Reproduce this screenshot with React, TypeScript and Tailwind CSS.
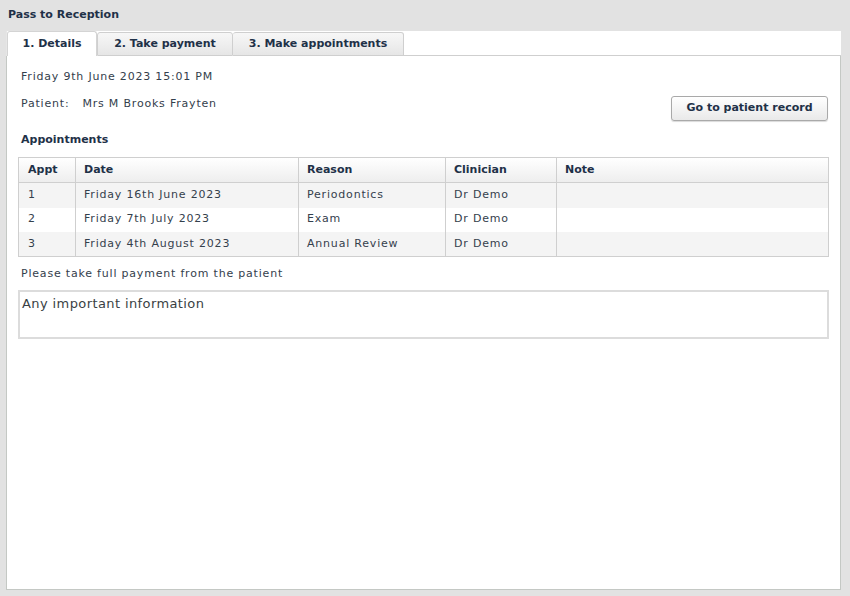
import React from 'react'

const rows = [
  { appt: '1', date: 'Friday 16th June 2023', reason: 'Periodontics', clinician: 'Dr Demo', note: '' },
  { appt: '2', date: 'Friday 7th July 2023', reason: 'Exam', clinician: 'Dr Demo', note: '' },
  { appt: '3', date: 'Friday 4th August 2023', reason: 'Annual Review', clinician: 'Dr Demo', note: '' },
]

export default function App() {
  return (
    <div className="h-[596px] w-[850px] overflow-hidden bg-[#e2e2e2] pl-[6px] pr-[9px] pt-[7px] text-[11px] text-[#34404c] [font-family:'DejaVu_Sans',Verdana,sans-serif]">
      <div className="h-[24px] pl-[2px] font-bold text-[#1f3148]">Pass to Reception</div>

      {/* tab strip */}
      <div className="flex h-[25px] items-end border-l border-[#e6e6e6] bg-white">
        <div className="flex h-[25px] w-[90px] items-center justify-center rounded-t-[3px] border border-b-0 border-[#d4d4d4] bg-white font-bold text-[#1f3148]">
          1. Details
        </div>
        <div className="flex h-[24px] w-[136px] items-center justify-center rounded-t-[3px] border border-[#cfcfcf] bg-gradient-to-b from-[#f7f7f7] to-[#e6e6e6] font-bold text-[#1f3148]">
          2. Take payment
        </div>
        <div className="flex h-[24px] w-[171px] items-center justify-center rounded-t-[3px] border border-l-0 border-[#cfcfcf] bg-gradient-to-b from-[#f7f7f7] to-[#e6e6e6] font-bold text-[#1f3148]">
          3. Make appointments
        </div>
        <div className="h-[24px] flex-1 border-b border-[#cfcfcf]" />
      </div>

      {/* panel */}
      <div className="h-[534px] border border-t-0 border-[#c4c8c4] bg-white px-[11px] pt-[13px]">
        <div className="pl-[3px] tracking-[0.8px]">Friday 9th June 2023 15:01 PM</div>
        <div className="mt-[10px] flex items-start justify-between">
          <div className="pl-[3px] tracking-[0.8px]">
            <span>Patient:</span>
            <span className="ml-[13px]">Mrs M Brooks Frayten</span>
          </div>
          <button className="mr-[1px] h-[25px] w-[157px] rounded-[3px] border border-[#a9a9a9] bg-gradient-to-b from-white to-[#e9e9e9] text-[11px] font-bold text-[#1f3148] shadow-[0_1px_1px_rgba(0,0,0,0.15)]">
            Go to patient record
          </button>
        </div>

        <div className="mt-[11px] pl-[3px] font-bold text-[#1f3148]">Appointments</div>

        <table className="mt-[9px] w-full border-collapse border border-[#cfcfcf] tracking-[0.8px]">
          <thead>
            <tr className="h-[25px] bg-gradient-to-b from-white to-[#ededed] text-left font-bold tracking-normal text-[#1f3148]">
              <th className="w-[57px] border border-[#cfcfcf] pl-[9px] font-bold">Appt</th>
              <th className="w-[223px] border border-[#cfcfcf] pl-[8px] font-bold">Date</th>
              <th className="w-[147px] border border-[#cfcfcf] pl-[8px] font-bold">Reason</th>
              <th className="w-[111px] border border-[#cfcfcf] pl-[8px] font-bold">Clinician</th>
              <th className="border border-[#cfcfcf] pl-[8px] font-bold">Note</th>
            </tr>
          </thead>
          <tbody>
            {rows.map((r, i) => (
              <tr key={r.appt} className={i % 2 === 0 ? 'h-[25px] bg-[#f4f4f4]' : 'h-[24px] bg-white'}>
                <td className="border-x border-[#cfcfcf] pl-[9px]">{r.appt}</td>
                <td className="border-x border-[#cfcfcf] pl-[8px]">{r.date}</td>
                <td className="border-x border-[#cfcfcf] pl-[8px]">{r.reason}</td>
                <td className="border-x border-[#cfcfcf] pl-[8px]">{r.clinician}</td>
                <td className="border-x border-[#cfcfcf] pl-[8px]">{r.note}</td>
              </tr>
            ))}
          </tbody>
        </table>

        <div className="mt-[9px] pl-[3px] tracking-[0.8px]">Please take full payment from the patient</div>

        <div className="mt-[7px] h-[49px] border-2 border-[#dcdcdc] px-[2px] pt-[2px] text-[13px] tracking-[0.4px] text-[#3a3f44]">
          Any important information
        </div>
      </div>
    </div>
  )
}
